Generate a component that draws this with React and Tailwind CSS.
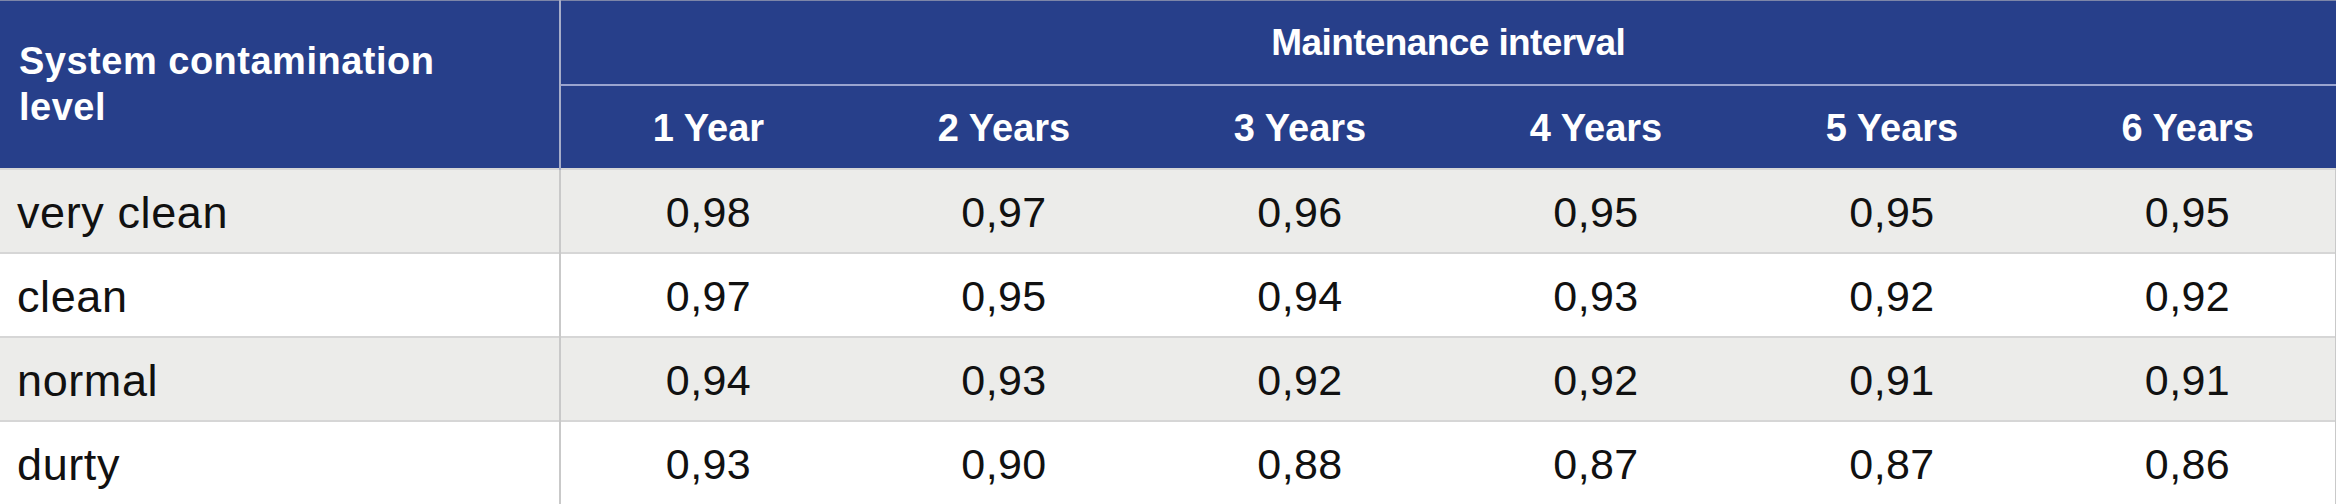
export default function App() {
  const years = ['1 Year', '2 Years', '3 Years', '4 Years', '5 Years', '6 Years']

  const rows = [
    { level: 'very clean', values: ['0,98', '0,97', '0,96', '0,95', '0,95', '0,95'] },
    { level: 'clean', values: ['0,97', '0,95', '0,94', '0,93', '0,92', '0,92'] },
    { level: 'normal', values: ['0,94', '0,93', '0,92', '0,92', '0,91', '0,91'] },
    { level: 'durty', values: ['0,93', '0,90', '0,88', '0,87', '0,87', '0,86'] }
  ]

  return (
    <div className="w-[2336px] h-[504px] bg-white font-['Liberation_Sans',Arial,sans-serif]">
      <table className="w-[2336px] table-fixed border-collapse">
        <colgroup>
          <col className="w-[560px]" />
          {years.map((y) => (
            <col key={y} className="w-[296px]" />
          ))}
        </colgroup>
        <thead>
          {/* Header */}
          <tr className="h-[84px] bg-[#273f8a] border-t border-[#7d86a8]">
            <th
              rowSpan={2}
              className="text-left align-middle pl-[19px] pr-4 text-white font-bold text-[38px] leading-[46px] tracking-[0.5px] border-r-2 border-[#a6adc9]"
            >
              System contamination
              <br />
              level
            </th>
            <th
              colSpan={6}
              className="text-center align-middle text-white font-bold text-[37px] tracking-[-0.6px] border-b-2 border-[#9aa4cf] border-r border-r-[#7d86a8]"
            >
              Maintenance interval
            </th>
          </tr>
          <tr className="h-[84px] bg-[#273f8a]">
            {years.map((y, i) => (
              <th
                key={y}
                className={`text-center align-middle pt-1 text-white font-bold text-[38px] ${i === years.length - 1 ? 'border-r border-[#7d86a8]' : ''}`}
              >
                {y}
              </th>
            ))}
          </tr>
        </thead>
        <tbody>
          {rows.map((row, idx) => (
            <tr
              key={row.level}
              className={`h-[84px] border-t-2 border-[#d6d6d6] ${idx === rows.length - 1 ? 'border-b-2 border-b-[#cfcfcf]' : ''} ${idx % 2 === 0 ? 'bg-[#ececea]' : 'bg-white'}`}
            >
              <td className="pl-[17px] pt-1 align-middle text-left text-[45px] tracking-[0.6px] text-[#111] border-r-2 border-[#c9c9c9]">
                {row.level}
              </td>
              {row.values.map((v, i) => (
                <td
                  key={i}
                  className={`pt-1 align-middle text-center text-[43px] text-[#111] tracking-[0.4px] ${i === row.values.length - 1 ? 'border-r-2 border-[#c9c9c9]' : ''}`}
                >
                  {v}
                </td>
              ))}
            </tr>
          ))}
        </tbody>
      </table>
    </div>
  )
}
